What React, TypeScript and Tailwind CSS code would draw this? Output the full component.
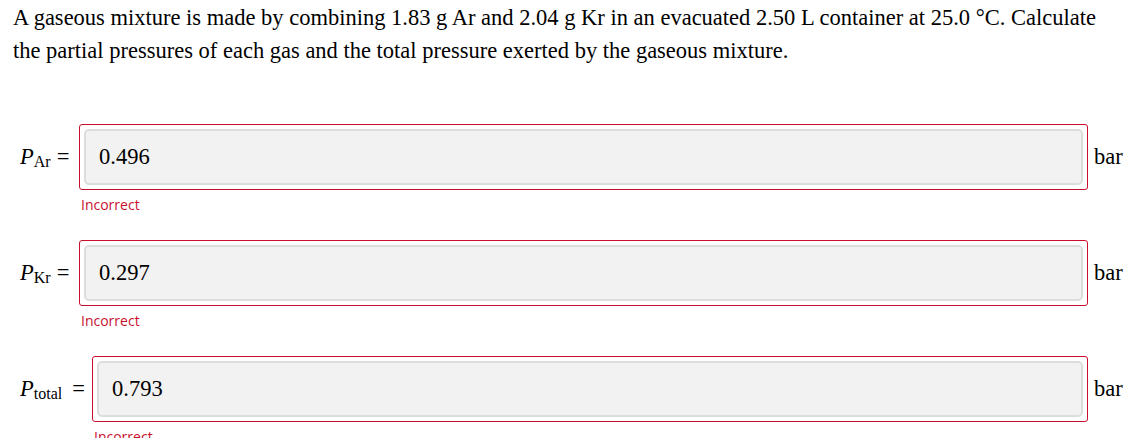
import React from "react";

type Row = { sym: string; sub: string; value: string; labelW: string; eqGap: string };

const rows: Row[] = [
  { sym: "P", sub: "Ar", value: "0.496", labelW: "w-[59px]", eqGap: "ml-[6px]" },
  { sym: "P", sub: "Kr", value: "0.297", labelW: "w-[59px]", eqGap: "ml-[6px]" },
  { sym: "P", sub: "total", value: "0.793", labelW: "w-[72px]", eqGap: "ml-[10px]" },
];

function AnswerRow({ row }: { row: Row }) {
  return (
    <div className="flex flex-col">
      <div className="flex items-center">
        <div className={`${row.labelW} flex items-center shrink-0 text-[22.5px] text-black`}>
          <span className="italic">{row.sym}</span>
          <span className="text-[16px] relative top-[5px]">{row.sub}</span>
          <span className={row.eqGap}>=</span>
        </div>
        <div className="flex-1 h-[66px] border border-[#c8102e] rounded-[3px] p-[4px]">
          <div className="h-full bg-[#f2f2f2] border-2 border-[#dddddd] rounded-[5px] flex items-center pl-[13px] text-[22.5px] text-black">
            {row.value}
          </div>
        </div>
        <div className="ml-[6px] w-[29px] text-[22.5px] text-black">bar</div>
      </div>
      <div
        className="text-[14px] leading-[18px] mt-[6px] text-[#c8102e]"
        style={{ fontFamily: '"Open Sans", sans-serif' }}
      >
        <span className={row.sub === "total" ? "ml-[74px]" : "ml-[61px]"}>Incorrect</span>
      </div>
    </div>
  );
}

export default function App() {
  return (
    <div
      className="w-[1144px] h-[438px] overflow-hidden bg-white"
      style={{ fontFamily: '"Liberation Serif", "Times New Roman", serif' }}
    >
      <p className="pl-[13px] pr-[20px] pt-[1px] text-[22.5px] leading-[33px] text-black">
        A gaseous mixture is made by combining 1.83 g Ar and 2.04 g Kr in an evacuated 2.50 L container at 25.0 °C. Calculate
        the partial pressures of each gas and the total pressure exerted by the gaseous mixture.
      </p>
      <div className="pl-[20px] pr-[21px] mt-[57px] flex flex-col gap-[26px]">
        {rows.map((r) => (
          <AnswerRow key={r.sub} row={r} />
        ))}
      </div>
    </div>
  );
}
